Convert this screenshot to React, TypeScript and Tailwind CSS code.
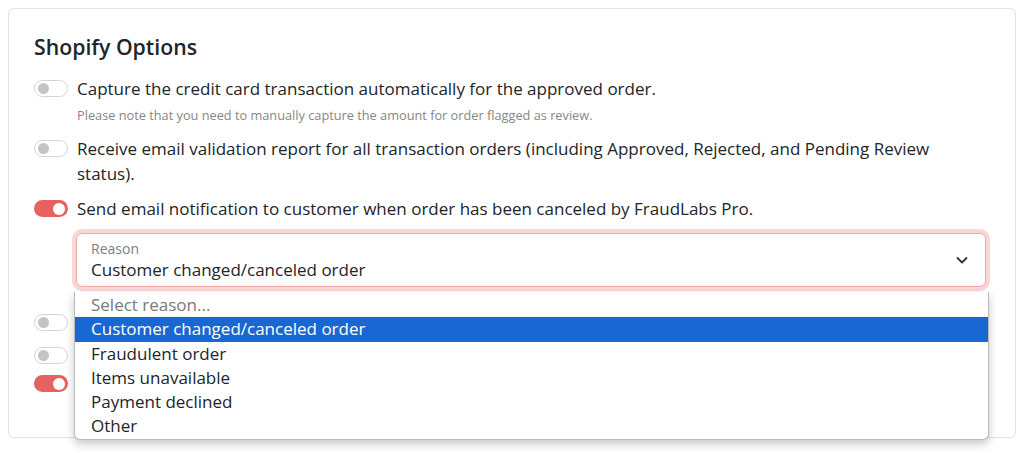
import React from "react";

function Toggle({ on }: { on?: boolean }) {
  return on ? (
    <div className="mt-[4px] flex h-[17px] w-[34px] shrink-0 items-center justify-end rounded-full bg-[#e86161] pr-[3px]">
      <div className="h-[12px] w-[12px] rounded-full bg-white" />
    </div>
  ) : (
    <div className="mt-[4px] flex h-[17px] w-[34px] shrink-0 items-center rounded-full border border-[#d4d4d4] bg-white pl-[3px]">
      <div className="h-[11px] w-[11px] rounded-full bg-[#c4c4c4]" />
    </div>
  );
}

function Row({ on, children, className = "" }: { on?: boolean; children?: React.ReactNode; className?: string }) {
  return (
    <div className={`flex min-h-[25px] items-start gap-[9px] ${className}`}>
      <Toggle on={on} />
      <div className="text-[17px] leading-[25px] text-[#212529]">{children}</div>
    </div>
  );
}

const options = [
  "Select reason...",
  "Customer changed/canceled order",
  "Fraudulent order",
  "Items unavailable",
  "Payment declined",
  "Other",
];

export default function App() {
  return (
    <div className="min-h-[453px] bg-white p-2" style={{ fontFamily: '"Open Sans", "Noto Sans", sans-serif' }}>
      <div className="relative rounded-[6px] border border-[#e2e2e2] bg-white px-[25px] pb-[41px] pt-6">
        <h2 className="mb-[15px] text-[21.25px] font-semibold leading-7 text-[#212529]">Shopify Options</h2>

        <Row>Capture the credit card transaction automatically for the approved order.</Row>
        <div className="ml-[43px] mt-[5px] text-[12.75px] leading-[18px] text-[#868686]">
          Please note that you need to manually capture the amount for order flagged as review.
        </div>

        <Row className="mt-[12px]">
          Receive email validation report for all transaction orders (including Approved, Rejected, and Pending Review status).
        </Row>

        <Row on className="mt-[10px]">
          Send email notification to customer when order has been canceled by FraudLabs Pro.
        </Row>

        <div className="ml-[42px] mr-[4px] mt-[12px] flex h-[54px] items-center justify-between rounded-[6px] border border-[#f0aaaa] bg-white pl-[14px] pr-[16px] shadow-[inset_0_-2px_3px_rgba(0,0,0,0.04)] ring-4 ring-[#fcd6d6]">
          <div className="flex flex-col">
            <span className="text-[14px] leading-[18px] text-[#7d7d7d]">Reason</span>
            <span className="text-[17px] leading-[23px] text-[#212529]">Customer changed/canceled order</span>
          </div>
          <svg width="14" height="14" viewBox="0 0 14 14" fill="none">
            <path d="M2.5 5l4.5 4.5L11.5 5" stroke="#333" strokeWidth="1.8" strokeLinecap="round" strokeLinejoin="round" />
          </svg>
        </div>

        <Row className="mt-[23px]" />
        <Row className="mt-[8px]" />
        <Row on className="mt-[3px]" />

        <div className="absolute left-[65px] top-[283px] w-[915px] overflow-hidden rounded-b-[6px] border border-t-0 border-[#b9b9b9] bg-white pt-[1px] shadow-[0_4px_10px_rgba(0,0,0,0.22)]">
          {options.map((o, i) => (
            <div
              key={o}
              className={`h-[24.3px] pl-[16px] text-[17px] leading-[24px] ${
                i === 1 ? "bg-[#1967d2] text-white" : i === 0 ? "text-[#7a7a7a]" : "text-[#212529]"
              }`}
            >
              {o}
            </div>
          ))}
        </div>
      </div>
    </div>
  );
}
